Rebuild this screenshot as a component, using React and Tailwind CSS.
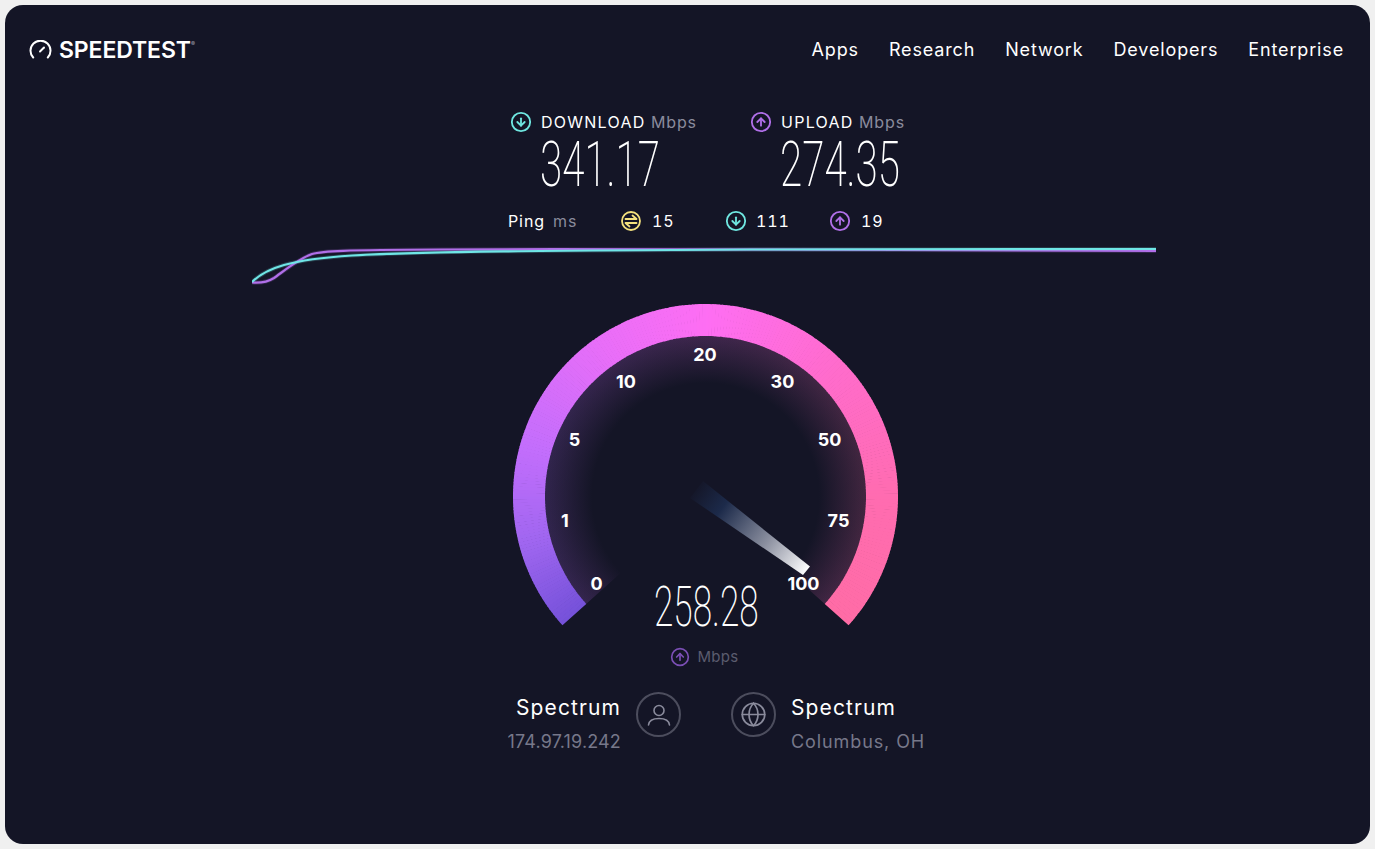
import React from "react";
import { CircleArrowDown, CircleArrowUp, Globe } from "lucide-react";

const NAV_LINKS = ["Apps", "Research", "Network", "Developers", "Enterprise"];

const TICKS = [
  { label: "0", x: 91.5, y: 286 },
  { label: "1", x: 60, y: 223 },
  { label: "5", x: 69.5, y: 142 },
  { label: "10", x: 121, y: 84 },
  { label: "20", x: 200, y: 57 },
  { label: "30", x: 277.5, y: 84 },
  { label: "50", x: 324.5, y: 142 },
  { label: "75", x: 333.5, y: 223 },
  { label: "100", x: 298.5, y: 286 },
];

const CX = 200.5;
const CY = 192.5;

// colour along the arc, angle in degrees from straight up
const ARC_STOPS = [
  [-132, [118, 82, 218]],
  [-105, [160, 102, 240]],
  [-75, [195, 110, 252]],
  [-35, [232, 110, 248]],
  [0, [254, 110, 243]],
  [45, [255, 108, 204]],
  [90, [255, 108, 176]],
  [132, [255, 108, 166]],
];

function arcColor(deg) {
  for (let i = 1; i < ARC_STOPS.length; i++) {
    const [a1, c1] = ARC_STOPS[i - 1];
    const [a2, c2] = ARC_STOPS[i];
    if (deg <= a2) {
      const t = (deg - a1) / (a2 - a1);
      const c = c1.map((v, k) => Math.round(v + (c2[k] - v) * t));
      return `rgb(${c[0]},${c[1]},${c[2]})`;
    }
  }
  return "rgb(255,108,166)";
}

function polar(r, deg) {
  const rad = (deg * Math.PI) / 180;
  return [CX + r * Math.sin(rad), CY - r * Math.cos(rad)];
}

function ringSegment(r1, r2, a1, a2) {
  const large = a2 - a1 > 180 ? 1 : 0;
  const [x1, y1] = polar(r2, a1);
  const [x2, y2] = polar(r2, a2);
  const [x3, y3] = polar(r1, a2);
  const [x4, y4] = polar(r1, a1);
  return `M${x1} ${y1}A${r2} ${r2} 0 ${large} 1 ${x2} ${y2}L${x3} ${y3}A${r1} ${r1} 0 ${large} 0 ${x4} ${y4}Z`;
}

const SEGMENTS = [];
for (let a = -132; a < 132; a += 1) SEGMENTS.push(a);

function Gauge() {
  return (
    <svg width="400" height="344" viewBox="0 0 400 344" className="block">
      <defs>
        <radialGradient id="glowFade" gradientUnits="userSpaceOnUse" cx={CX} cy={CY} r="162">
          <stop offset="0.7" stopColor="#141526" stopOpacity="1" />
          <stop offset="1" stopColor="#141526" stopOpacity="0" />
        </radialGradient>
        <linearGradient id="glowTint" x1="0" y1="0" x2="1" y2="0">
          <stop offset="0" stopColor="#a866f0" />
          <stop offset="0.5" stopColor="#f06ef0" />
          <stop offset="1" stopColor="#ff6ca8" />
        </linearGradient>
        <linearGradient id="needleFill" gradientUnits="userSpaceOnUse" x1="188" y1="184" x2="302" y2="268">
          <stop offset="0" stopColor="#1c2a4a" stopOpacity="0" />
          <stop offset="0.25" stopColor="#1c2a4a" />
          <stop offset="0.65" stopColor="#8c90a0" />
          <stop offset="1" stopColor="#ffffff" />
        </linearGradient>
      </defs>
      <path d={ringSegment(112, 161, -132, 132)} fill="url(#glowTint)" opacity="0.2" />
      <circle cx={CX} cy={CY} r="162" fill="url(#glowFade)" />
      {SEGMENTS.map((a) => (
        <path key={a} d={ringSegment(160.5, 192.5, a, Math.min(a + 1.2, 132))} fill={arcColor(a)} />
      ))}
      <polygon points="185,194 198,177 305,262.5 298,271" fill="url(#needleFill)" />
      {TICKS.map((t) => (
        <text
          key={t.label}
          x={t.x}
          y={t.y}
          textAnchor="middle"
          className="fill-white text-[18px] font-bold"
          style={{ fontFamily: "Inter, sans-serif" }}
        >
          {t.label}
        </text>
      ))}
    </svg>
  );
}

const PURPLE_LINE = "M0 37.5C6 38 14 38 22 33C30 27.5 46 14 60 9C70 6 90 5 190 4.5C300 4 420 4 520 4.5C600 6 700 6 904 6";
const CYAN_LINE = "M0 37C8 29 18 24 32 20C50 15 70 12.5 100 10.5C170 6.5 300 5.5 500 4.5C650 4 800 4 904 4";

function SpeedChart() {
  return (
    <svg width="906" height="40" viewBox="0 0 906 40" fill="none" className="block">
      <path d={PURPLE_LINE} stroke="#b06fe8" strokeWidth="4" opacity="0.2" />
      <path d={CYAN_LINE} stroke="#6fe6e6" strokeWidth="4" opacity="0.2" />
      <path d={PURPLE_LINE} stroke="#b06fe8" strokeWidth="2.2" />
      <path d={CYAN_LINE} stroke="#6fe6e6" strokeWidth="2.2" />
    </svg>
  );
}

function PingIcon() {
  return (
    <svg width="20" height="20" viewBox="0 0 20 20" fill="none" stroke="#f5e27e" strokeWidth="1.8" strokeLinecap="round" strokeLinejoin="round">
      <circle cx="10" cy="10" r="9" />
      <path d="M4.5 8H15.5L11.5 4.5" />
      <path d="M15.5 12H4.5L8.5 15.5" />
    </svg>
  );
}

function UserIcon() {
  return (
    <svg width="24" height="24" viewBox="0 0 24 24" fill="none" stroke="#8a8b9c" strokeWidth="1.6" strokeLinecap="round">
      <circle cx="12" cy="7.5" r="5" />
      <path d="M1.5 22C2 17.5 6 15.5 12 15.5S22 17.5 22.5 22" />
    </svg>
  );
}

function DownIcon({ size = 22 }) {
  return <CircleArrowDown size={size} color="#6fe6e0" strokeWidth={2} className="-m-px shrink-0" />;
}

function UpIcon({ size = 22, color = "#b06fe8" }) {
  return <CircleArrowUp size={size} color={color} strokeWidth={2} className="-m-px shrink-0" />;
}

// condensed numerals: no condensed thin family is installed, so squeeze Roboto
function BigNumber({ children, className }) {
  return (
    <div
      className={`font-extralight text-white whitespace-nowrap origin-left scale-x-[0.64] ${className}`}
      style={{ fontFamily: "Roboto, sans-serif" }}
    >
      {children}
    </div>
  );
}

function StatColumn({ icon, label, value, width }) {
  return (
    <div className={`flex gap-[10px] ${width}`}>
      <div className="mt-px">{icon}</div>
      <div>
        <div className="text-[16px] leading-[22px] whitespace-nowrap tracking-[0.9px]">
          <span className="text-white tracking-[1.25px]">{label}</span> <span className="text-[#8a8b9c]">Mbps</span>
        </div>
        <BigNumber className="text-[63px] leading-[48px] mt-[8px] ml-[-1px] h-[48px]">{value}</BigNumber>
      </div>
    </div>
  );
}

export default function App() {
  return (
    <div className="min-h-screen bg-[#f0f0f0] p-[5px]" style={{ fontFamily: "Inter, sans-serif" }}>
      <div className="h-[839px] rounded-[18px] bg-[#141526] overflow-hidden">
        <header className="h-[89px] flex items-center justify-between pl-[24px] pr-[26px]">
          <div className="flex items-center gap-[7px] mt-px">
            <svg width="23" height="20" viewBox="0 0 23 20" fill="none" stroke="white" strokeWidth="2" strokeLinecap="round">
              <path d="M4.2 17.5A10 10 0 1 1 18.8 17.5" />
              <path d="M11 11.5L15 7.5" />
            </svg>
            <div className="text-white text-[23px] font-semibold tracking-[-0.1px] leading-none">
              SPEEDTEST<sup className="text-[6px] text-[#9a9aa8] top-[-12px]">®</sup>
            </div>
          </div>
          <nav className="flex items-center gap-[30px] text-[18px] text-white tracking-[0.85px]">
            {NAV_LINKS.map((l) => (
              <a key={l}>{l}</a>
            ))}
          </nav>
        </header>

        <main className="flex flex-col items-center pl-[35px]">
          <div className="w-[392px] ml-[4px] mt-[17px] flex">
            <StatColumn icon={<DownIcon />} label="DOWNLOAD" value="341.17" width="w-[240px]" />
            <StatColumn icon={<UpIcon />} label="UPLOAD" value="274.35" width="w-[152px]" />
          </div>

          <div className="w-[392px] ml-[-2px] mt-[22px] flex items-center h-[20px] text-[16px] text-white tracking-[0.9px] tabular-nums">
            <span className="w-[45px]">Ping</span>
            <span className="w-[68px] text-[#8a8b9c]">ms</span>
            <PingIcon />
            <span className="w-[85px] pl-[11px]">15</span>
            <DownIcon />
            <span className="w-[84px] pl-[10px]">111</span>
            <UpIcon />
            <span className="pl-[11px]">19</span>
          </div>

          <div className="mt-[14px]">
            <SpeedChart />
          </div>

          <div className="relative mt-[19px] h-[344px] w-[400px]">
            <Gauge />
            <div className="absolute left-[149px] top-[273px] w-[110px]">
              <BigNumber className="text-[55px] leading-[60px]">258.28</BigNumber>
            </div>
          </div>

          <div className="flex items-center gap-[8px] text-[15px] text-[#5b5c6e] h-[18px] tracking-[0.3px]">
            <UpIcon size={20} color="#7b4fb5" />
            <span>Mbps</span>
          </div>

          <div className="mt-[27px] flex items-start ml-[2px]">
            <div className="text-right w-[150px] pt-px">
              <div className="text-[21px] leading-[28px] text-white tracking-[1.1px]">Spectrum</div>
              <div className="text-[18px] leading-[24px] mt-[8px] text-[#77788a] whitespace-nowrap tracking-[0.15px]">174.97.19.242</div>
            </div>
            <div className="ml-[15px] h-[45px] w-[45px] mt-[-1px] rounded-full border-2 border-[#4c4d5d] flex items-center justify-center">
              <UserIcon />
            </div>
            <div className="ml-[50px] h-[45px] w-[45px] mt-[-1px] rounded-full border-2 border-[#4c4d5d] flex items-center justify-center">
              <Globe size={27} color="#8a8b9c" strokeWidth={1.5} />
            </div>
            <div className="ml-[15px] w-[150px] pt-px">
              <div className="text-[21px] leading-[28px] text-white tracking-[1.1px]">Spectrum</div>
              <div className="text-[18px] leading-[24px] mt-[8px] text-[#77788a] whitespace-nowrap tracking-[0.9px]">Columbus, OH</div>
            </div>
          </div>
        </main>
      </div>
    </div>
  );
}
